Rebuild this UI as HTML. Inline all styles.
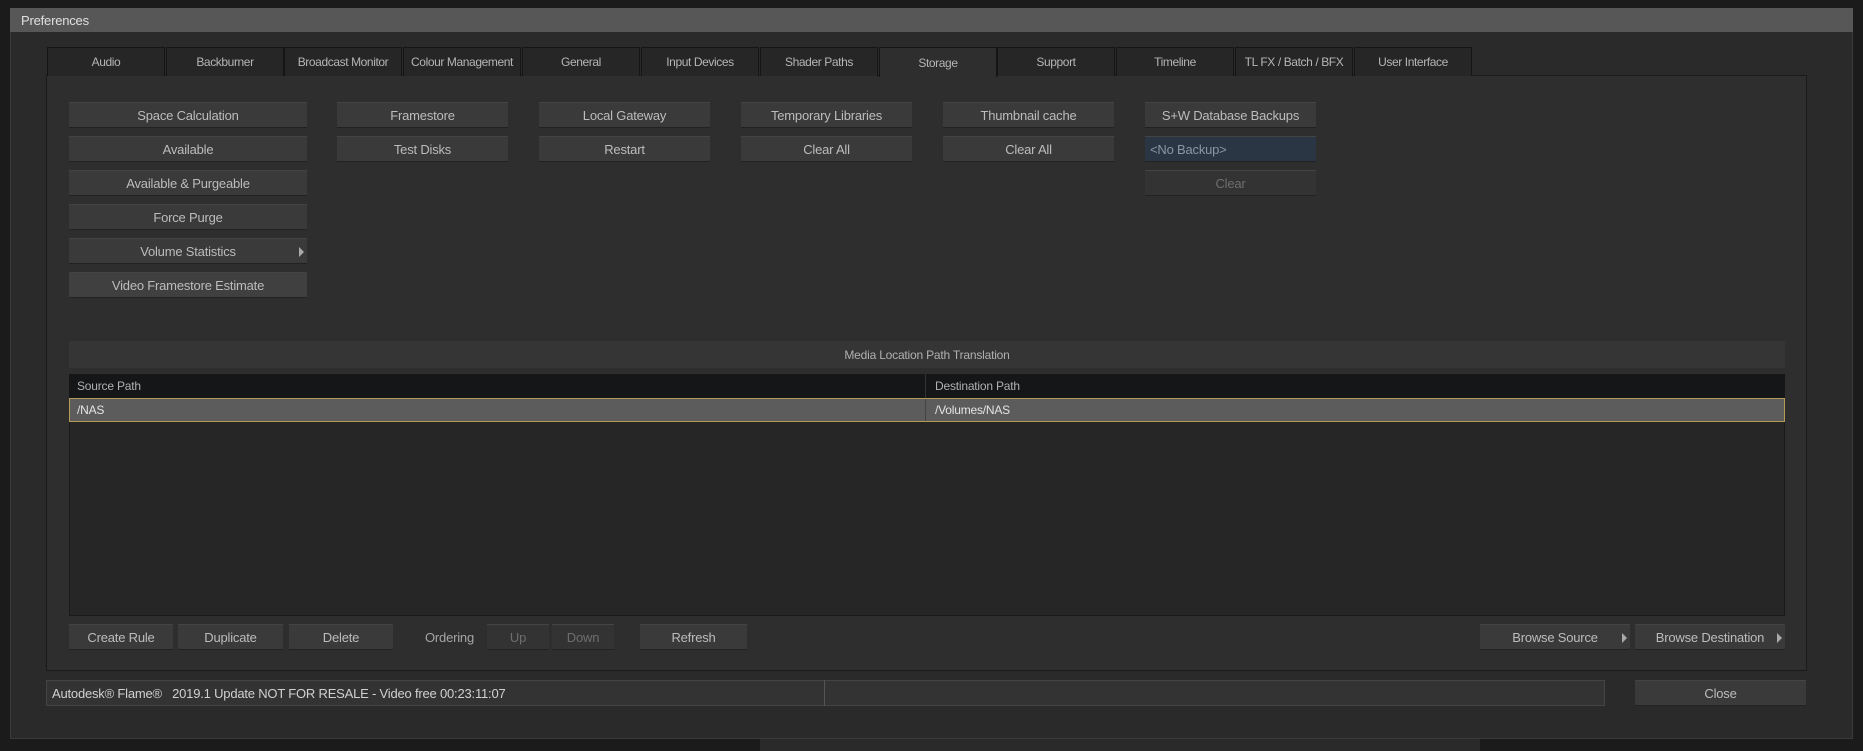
<!DOCTYPE html>
<html><head><meta charset="utf-8"><style>
*{box-sizing:border-box;margin:0;padding:0}
body{width:1863px;height:751px;background:#1b1b1b;position:relative;overflow:hidden;font-family:"Liberation Sans",sans-serif;font-size:13px;color:#c4c4c4;letter-spacing:-0.2px}
.a{position:absolute;white-space:nowrap}
.btn{position:absolute;background:#3a3a3a;border-bottom:1px solid #222;border-top:1px solid #444;display:flex;align-items:center;justify-content:center;color:#bcbcbc;font-size:13px;height:26px;white-space:nowrap}
.dis{color:#6e6e6e;background:#333}
.tab{position:absolute;top:47px;height:29px;width:118px;background:#262626;border:1px solid #151515;border-bottom:none;display:flex;align-items:center;justify-content:center;color:#b5b5b5;font-size:12px;white-space:nowrap;letter-spacing:-0.4px}
.arrow{position:absolute;right:3px;top:8px;width:0;height:0;border-left:5px solid #aaa;border-top:5px solid transparent;border-bottom:5px solid transparent}
</style></head><body>
<div class="a" style="left:10px;top:8px;width:1843px;height:731px;background:#2a2a2a;border:1px solid #3a3a3a"></div>
<div class="a" style="left:10px;top:8px;width:1843px;height:24px;background:#575757"></div>
<div class="a" style="left:21px;top:13px;font-size:13px;color:#e0e0e0">Preferences</div>

<div class="a" style="left:46px;top:75px;width:1761px;height:596px;background:#2e2e2e;border:1px solid #1a1a1a"></div>

<div class="tab" style="left:47px">Audio</div>
<div class="tab" style="left:166px">Backburner</div>
<div class="tab" style="left:284px">Broadcast Monitor</div>
<div class="tab" style="left:403px">Colour Management</div>
<div class="tab" style="left:522px">General</div>
<div class="tab" style="left:641px">Input Devices</div>
<div class="tab" style="left:760px">Shader Paths</div>
<div class="tab" style="left:879px;background:#2e2e2e;height:30px">Storage</div>
<div class="tab" style="left:997px">Support</div>
<div class="tab" style="left:1116px">Timeline</div>
<div class="tab" style="left:1235px">TL FX / Batch / BFX</div>
<div class="tab" style="left:1354px">User Interface</div>

<div class="btn" style="left:69px;top:102px;width:238px">Space Calculation</div>
<div class="btn" style="left:69px;top:136px;width:238px">Available</div>
<div class="btn" style="left:69px;top:170px;width:238px">Available &amp; Purgeable</div>
<div class="btn" style="left:69px;top:204px;width:238px">Force Purge</div>
<div class="btn" style="left:69px;top:238px;width:238px">Volume Statistics<span class="arrow"></span></div>
<div class="btn" style="left:69px;top:272px;width:238px;background:#404040">Video Framestore Estimate</div>

<div class="btn" style="left:337px;top:102px;width:171px">Framestore</div>
<div class="btn" style="left:337px;top:136px;width:171px">Test Disks</div>
<div class="btn" style="left:539px;top:102px;width:171px">Local Gateway</div>
<div class="btn" style="left:539px;top:136px;width:171px">Restart</div>
<div class="btn" style="left:741px;top:102px;width:171px">Temporary Libraries</div>
<div class="btn" style="left:741px;top:136px;width:171px">Clear All</div>
<div class="btn" style="left:943px;top:102px;width:171px">Thumbnail cache</div>
<div class="btn" style="left:943px;top:136px;width:171px">Clear All</div>
<div class="btn" style="left:1145px;top:102px;width:171px">S+W Database Backups</div>
<div class="btn" style="left:1145px;top:136px;width:171px;background:#2a3644;justify-content:flex-start;padding-left:5px;color:#8a96a2">&lt;No Backup&gt;</div>
<div class="btn dis" style="left:1145px;top:170px;width:171px">Clear</div>

<div class="a" style="left:69px;top:341px;width:1716px;height:27px;background:#353535;display:flex;align-items:center;justify-content:center;font-size:12px;color:#b0b0b0">Media Location Path Translation</div>

<div class="a" style="left:69px;top:374px;width:1716px;height:242px;background:#262626;border:1px solid #1a1a1a"></div>
<div class="a" style="left:69px;top:374px;width:1716px;height:24px;background:#151617"></div>
<div class="a" style="left:77px;top:379px;font-size:12px;color:#b0b0b0">Source Path</div>
<div class="a" style="left:935px;top:379px;font-size:12px;color:#b0b0b0">Destination Path</div>
<div class="a" style="left:925px;top:374px;width:1px;height:48px;background:#333"></div>
<div class="a" style="left:69px;top:398px;width:1716px;height:24px;background:#5c5c5c;border:1px solid #b49a55"></div>
<div class="a" style="left:925px;top:399px;width:1px;height:22px;background:#444"></div>
<div class="a" style="left:77px;top:403px;font-size:12px;color:#e4e4e4">/NAS</div>
<div class="a" style="left:935px;top:403px;font-size:12px;color:#e4e4e4">/Volumes/NAS</div>

<div class="btn" style="left:69px;top:624px;width:104px">Create Rule</div>
<div class="btn" style="left:178px;top:624px;width:105px">Duplicate</div>
<div class="btn" style="left:289px;top:624px;width:104px">Delete</div>
<div class="a" style="left:425px;top:630px;font-size:13px;color:#a5a5a5">Ordering</div>
<div class="btn dis" style="left:487px;top:624px;width:62px">Up</div>
<div class="btn dis" style="left:552px;top:624px;width:62px">Down</div>
<div class="btn" style="left:640px;top:624px;width:107px">Refresh</div>
<div class="btn" style="left:1480px;top:624px;width:150px">Browse Source<span class="arrow"></span></div>
<div class="btn" style="left:1635px;top:624px;width:150px">Browse Destination<span class="arrow"></span></div>

<div class="a" style="left:46px;top:680px;width:1559px;height:26px;background:#333;border:1px solid #444"></div>
<div class="a" style="left:824px;top:680px;width:1px;height:26px;background:#555"></div>
<div class="a" style="left:52px;top:686px;font-size:13px;color:#d0d0d0">Autodesk® Flame®&nbsp;&nbsp;&nbsp;2019.1 Update NOT FOR RESALE - Video free 00:23:11:07</div>
<div class="btn" style="left:1635px;top:680px;width:171px;height:26px">Close</div>

<div class="a" style="left:760px;top:739px;width:720px;height:12px;background:#2a2a2a"></div>
</body></html>
